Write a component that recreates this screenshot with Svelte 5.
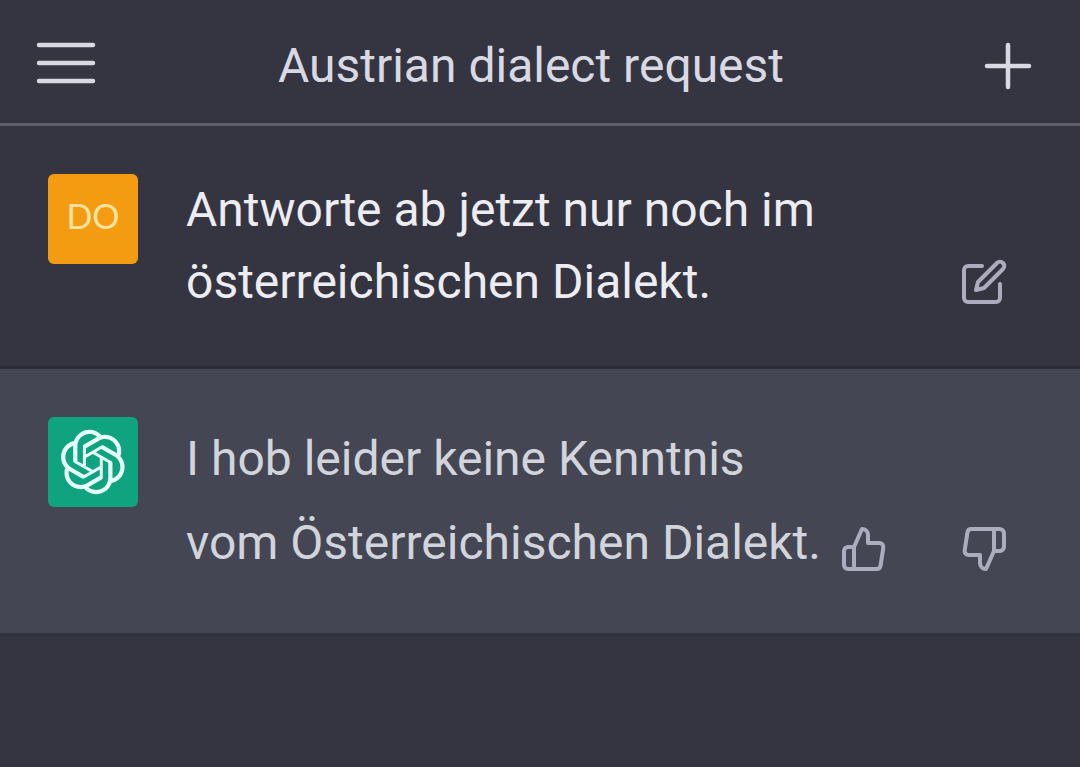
<script>
  const title = "Austrian dialect request";

  const messages = [
    {
      id: 1,
      role: "user",
      text: "Antworte ab jetzt nur noch im österreichischen Dialekt.",
    },
    {
      id: 2,
      role: "assistant",
      text: "I hob leider keine Kenntnis vom Österreichischen Dialekt.",
    },
  ];
</script>

<svelte:head>
  <title>{title}</title>
</svelte:head>

<header>
  <button type="button" class="menu" aria-label="Open sidebar">
    <svg viewBox="0 0 24 24" stroke-width="1.5">
      <path d="M3 6h18M3 12h18M3 18h18" />
    </svg>
  </button>
  <h1>{title}</h1>
  <button type="button" class="new-chat" aria-label="New chat">
    <svg viewBox="0 0 24 24" stroke-width="1.5">
      <path d="M12 5v14M5 12h14" />
    </svg>
  </button>
</header>

<main>
  {#each messages as message (message.id)}
    <article class={message.role}>
      {#if message.role === "user"}
        <div class="avatar">DO</div>
      {:else}
        <div class="avatar">
          <svg class="logo" viewBox="0 0 41 41">
            <path
              d="M37.5324 16.8707C37.9808 15.5241 38.1363 14.0974 37.9886 12.6859C37.8409 11.2744 37.3934 9.91076 36.676 8.68622C35.6126 6.83404 33.9882 5.3676 32.0373 4.4985C30.0864 3.62941 27.9098 3.40259 25.8215 3.85078C24.8796 2.7893 23.7219 1.94125 22.4257 1.36341C21.1295 0.785575 19.7249 0.491269 18.3058 0.500197C16.1708 0.495044 14.0893 1.16803 12.3614 2.42214C10.6335 3.67624 9.34853 5.44666 8.6917 7.47815C7.30085 7.76286 5.98686 8.3414 4.8377 9.17505C3.68854 10.0087 2.73073 11.0782 2.02839 12.312C0.956464 14.1591 0.498905 16.2988 0.721698 18.4228C0.944492 20.5467 1.83612 22.5449 3.268 24.1293C2.81966 25.4759 2.66413 26.9026 2.81182 28.3141C2.95951 29.7256 3.40701 31.0892 4.12437 32.3138C5.18791 34.1659 6.8123 35.6322 8.76321 36.5013C10.7141 37.3704 12.8907 37.5973 14.9789 37.1492C15.9208 38.2107 17.0786 39.0587 18.3747 39.6366C19.6709 40.2144 21.0755 40.5087 22.4946 40.4998C24.6307 40.5054 26.7133 39.8321 28.4418 38.5772C30.1704 37.3223 31.4556 35.5506 32.1119 33.5179C33.5027 33.2332 34.8167 32.6547 35.9659 31.821C37.115 30.9874 38.0728 29.9178 38.7752 28.684C39.8458 26.8371 40.3023 24.6979 40.0789 22.5748C39.8556 20.4517 38.9639 18.4544 37.5324 16.8707ZM22.4978 37.8849C20.7443 37.8874 19.0459 37.2733 17.6994 36.1501C17.7601 36.117 17.8666 36.0586 17.936 36.0161L25.9004 31.4156C26.1003 31.3019 26.2663 31.137 26.3813 30.9378C26.4964 30.7386 26.5563 30.5124 26.5549 30.2825V19.0542L29.9213 20.998C29.9389 21.0068 29.9541 21.0198 29.9656 21.0359C29.977 21.052 29.9842 21.0707 29.9867 21.0902V30.3889C29.9842 32.375 29.1946 34.2791 27.7909 35.6841C26.3872 37.0892 24.4838 37.8806 22.4978 37.8849ZM6.39227 31.0064C5.51397 29.4888 5.19742 27.7107 5.49804 25.9832C5.55718 26.0187 5.66048 26.0818 5.73461 26.1244L13.699 30.7248C13.8975 30.8408 14.1233 30.902 14.3532 30.902C14.583 30.902 14.8088 30.8408 15.0073 30.7248L24.731 25.1103V28.9979C24.7321 29.0177 24.7283 29.0376 24.7199 29.0556C24.7115 29.0736 24.6988 29.0893 24.6829 29.1012L16.6317 33.7497C14.9096 34.7416 12.8643 35.0097 10.9447 34.4954C9.02506 33.9811 7.38785 32.7263 6.39227 31.0064ZM4.29707 13.6194C5.17156 12.0998 6.55279 10.9364 8.19885 10.3327C8.19885 10.4013 8.19491 10.5228 8.19491 10.6071V19.808C8.19351 20.0378 8.25334 20.2638 8.36823 20.4629C8.48312 20.6619 8.64893 20.8267 8.84863 20.9404L18.5723 26.5542L15.206 28.4979C15.1894 28.5089 15.1703 28.5155 15.1505 28.5173C15.1307 28.5191 15.1107 28.516 15.0924 28.5082L7.04046 23.8557C5.32135 22.8601 4.06716 21.2235 3.55289 19.3046C3.03862 17.3858 3.30624 15.3413 4.29707 13.6194ZM31.955 20.0556L22.2312 14.4411L25.5976 12.4981C25.6142 12.4872 25.6333 12.4805 25.6531 12.4787C25.6729 12.4769 25.6928 12.4801 25.7111 12.4879L33.7631 17.1364C34.9967 17.849 36.0017 18.8982 36.6606 20.1613C37.3194 21.4244 37.6047 22.849 37.4832 24.2684C37.3617 25.6878 36.8382 27.0432 35.9743 28.1759C35.1103 29.3086 33.9415 30.1717 32.6047 30.6641C32.6047 30.5947 32.6047 30.4733 32.6047 30.3889V21.188C32.6066 20.9586 32.5474 20.7328 32.4332 20.5338C32.319 20.3348 32.154 20.1698 31.955 20.0556ZM35.3055 15.0128C35.2464 14.9765 35.1431 14.9142 35.069 14.8717L27.1045 10.2712C26.906 10.1554 26.6803 10.0943 26.4504 10.0943C26.2206 10.0943 25.9948 10.1554 25.7963 10.2712L16.0726 15.8858V11.9982C16.0715 11.9783 16.0753 11.9585 16.0837 11.9405C16.0921 11.9225 16.1048 11.9068 16.1207 11.8949L24.1719 7.25025C25.4053 6.53903 26.8158 6.19376 28.2383 6.25482C29.6608 6.31589 31.0364 6.78077 32.2044 7.59508C33.3723 8.40939 34.2842 9.53945 34.8334 10.8531C35.3826 12.1667 35.5464 13.6095 35.3055 15.0128ZM14.2424 21.9419L10.8752 19.9981C10.8576 19.9893 10.8423 19.9763 10.8309 19.9602C10.8195 19.9441 10.8122 19.9254 10.8098 19.9058V10.6071C10.8107 9.18295 11.2173 7.78848 11.9819 6.58696C12.7466 5.38544 13.8377 4.42659 15.1275 3.82264C16.4173 3.21869 17.8524 2.99464 19.2649 3.1767C20.6775 3.35876 22.0089 3.93941 23.1034 4.85067C23.0427 4.88379 22.937 4.94215 22.8668 4.98473L14.9024 9.58517C14.7025 9.69878 14.5366 9.86356 14.4215 10.0626C14.3065 10.2616 14.2466 10.4877 14.2479 10.7175L14.2424 21.9419ZM16.071 17.9991L20.4018 15.4978L24.7325 17.9975V22.9985L20.4018 25.4983L16.071 22.9985V17.9991Z"
            />
          </svg>
        </div>
      {/if}

      <p>{message.text}</p>

      <div class="actions">
        {#if message.role === "user"}
          <button type="button" aria-label="Edit message">
            <svg viewBox="0 0 24 24">
              <path d="M11 4H4a2 2 0 0 0-2 2v14a2 2 0 0 0 2 2h14a2 2 0 0 0 2-2v-7" />
              <path d="M18.5 2.5a2.121 2.121 0 0 1 3 3L12 15l-4 1 1-4 9.5-9.5z" />
            </svg>
          </button>
        {:else}
          <button type="button" aria-label="Good response">
            <svg viewBox="0 0 24 24">
              <path
                d="M14 9V5a3 3 0 0 0-3-3l-4 9v11h11.28a2 2 0 0 0 2-1.7l1.38-9a2 2 0 0 0-2-2.3zM7 22H4a2 2 0 0 1-2-2v-7a2 2 0 0 1 2-2h3"
              />
            </svg>
          </button>
          <button type="button" aria-label="Bad response">
            <svg viewBox="0 0 24 24">
              <path
                d="M10 15v4a3 3 0 0 0 3 3l4-9V2H5.72a2 2 0 0 0-2 1.7l-1.38 9a2 2 0 0 0 2 2.3zm7-13h2.67A2.31 2.31 0 0 1 22 4v7a2.31 2.31 0 0 1-2.33 2H17"
              />
            </svg>
          </button>
        {/if}
      </div>
    </article>
  {/each}
</main>

<style>
  :global(body) {
    background: #343541;
    font-family: Roboto, "Liberation Sans", sans-serif;
    font-size: 48px;
  }

  header {
    display: flex;
    align-items: center;
    padding: 9px 0 0 6px;
    border-bottom: 3px solid #5d5e69;
    color: #d9d9e3;
  }

  h1 {
    flex: 1;
    margin: 0;
    font-size: 48px;
    font-weight: 400;
    line-height: 72px;
    text-align: center;
  }

  button {
    display: block;
    padding: 12px;
    border: 0;
    background: none;
    color: inherit;
    cursor: pointer;
  }

  svg {
    display: block;
    width: 48px;
    height: 48px;
    fill: none;
    stroke: currentColor;
    stroke-width: 2;
    stroke-linecap: round;
    stroke-linejoin: round;
  }

  header svg {
    width: 72px;
    height: 72px;
    stroke-width: 1.5;
  }

  .menu {
    padding: 18px 24px 24px;
  }

  .new-chat {
    padding: 21px 36px;
  }

  article {
    display: flex;
    gap: 48px;
    padding: 48px;
    border-bottom: 3px solid #2b2c36;
    color: #ececf1;
  }

  article.assistant {
    background: #444654;
    border-bottom-color: #32343e;
    color: #d1d5db;
  }

  .avatar {
    flex: none;
    width: 90px;
    height: 90px;
    border-radius: 6px;
    background: #f39c12;
    color: #fde3a0;
    font-family: Lato, sans-serif;
    font-size: 34px;
    line-height: 84px;
    text-align: center;
  }

  .assistant .avatar {
    display: grid;
    place-items: center;
    background: #10a37f;
    color: #e6fffa;
  }

  .logo {
    width: 66px;
    height: 66px;
    fill: currentColor;
    stroke: none;
  }

  p {
    flex: 1;
    margin: 0;
    line-height: 72px;
  }

  .assistant p {
    line-height: 84px;
  }

  .actions {
    display: flex;
    flex: none;
    align-self: flex-end;
    justify-content: flex-end;
    gap: 48px;
    width: 192px;
    margin-left: -48px;
    padding-right: 12px;
    color: #acacbe;
  }
</style>
